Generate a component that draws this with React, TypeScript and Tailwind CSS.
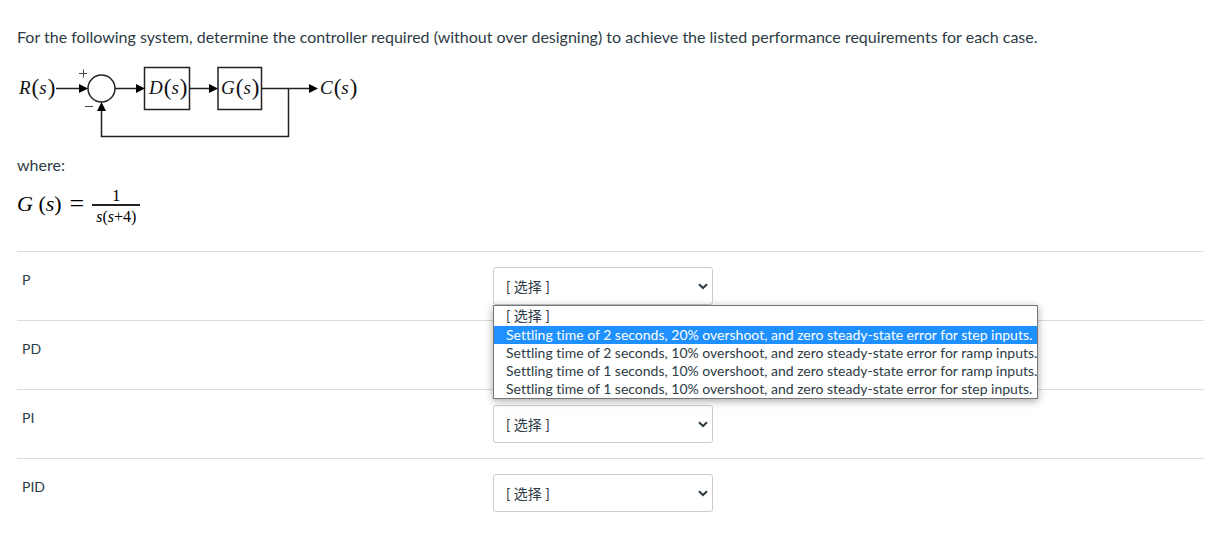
const PLACEHOLDER = '[ 选择 ]';

const options = [
  'Settling time of 2 seconds, 20% overshoot, and zero steady-state error for step inputs.',
  'Settling time of 2 seconds, 10% overshoot, and zero steady-state error for ramp inputs.',
  'Settling time of 1 seconds, 10% overshoot, and zero steady-state error for ramp inputs.',
  'Settling time of 1 seconds, 10% overshoot, and zero steady-state error for step inputs.',
];

const controllers = ['P', 'PD', 'PI', 'PID'];

function Signal({ x, name }: { x: number; name: string }) {
  return (
    <text x={x} y={29} fontSize={19} fill="#111">
      <tspan fontStyle="italic">{name}</tspan>
      <tspan dx={1} dy={1} fontSize={23}>(</tspan>
      <tspan dy={-1} fontStyle="italic">s</tspan>
      <tspan dx={1} dy={1} fontSize={23}>)</tspan>
    </text>
  );
}

function BlockDiagram() {
  return (
    <svg
      width="344"
      height="76"
      viewBox="0 0 344 76"
      role="img"
      aria-label="Feedback loop block diagram"
      className="block font-['Liberation_Serif',serif]"
    >
      <g fill="none" stroke="#222" strokeWidth="1.5">
        <path d="M39 23.5H64M98 23.5H120M173 23.5H194M244 23.5H294" />
        <path d="M271.5 23.5V71.5H84.5V45" />
        <circle cx="84.5" cy="23.5" r="13.5" />
        <rect x="127.5" y="2.5" width="45" height="42" />
        <rect x="201" y="2.5" width="43.5" height="42" />
      </g>
      <path
        fill="#000"
        d="M62 19L71 23.5L62 28ZM119 19L128 23.5L119 28ZM192 19L201 23.5L192 28ZM292 19L301 23.5L292 28ZM84.5 37L80 46H89Z"
      />
      <path stroke="#444" d="M62 8.500H70M66.500 4.500V12.500M68 41.500H76" />
      <Signal x={2} name="R" />
      <Signal x={132} name="D" />
      <Signal x={204} name="G" />
      <Signal x={303} name="C" />
    </svg>
  );
}

function TransferFunction() {
  return (
    <div className="flex h-9 items-start font-['Liberation_Serif',serif] text-[22px] leading-8 text-black">
      <span className="mr-2">
        <i>G</i> (<i>s</i>)
      </span>
      <span className="mr-2 text-[26px]">=</span>
      <span className="flex w-12 flex-col text-center text-base leading-4">
        <span className="border-b-2 border-[#222]">1</span>
        <span className="pt-[3px]">
          <i>s</i>(<i>s</i>+4)
        </span>
      </span>
    </div>
  );
}

function OptionList() {
  return (
    <ul
      role="listbox"
      aria-label="P"
      className="absolute top-full left-0 z-10 border border-[#767676] bg-white whitespace-nowrap shadow-[0_2px_8px_rgba(0,0,0,0.35)]"
    >
      <li role="option" aria-selected="false" className="h-5 pl-3 leading-5">
        {PLACEHOLDER}
      </li>
      {options.map((option, i) => (
        <li
          key={option}
          role="option"
          aria-selected={i === 0}
          className={`h-[18px] pl-3 leading-[18px] ${i === 0 ? 'bg-[#1e90ff] text-white' : ''}`}
        >
          {option}
        </li>
      ))}
    </ul>
  );
}

function AnswerRow({ name, open }: { name: string; open: boolean }) {
  const id = `answer-${name}`;

  return (
    <div className="flex border-t border-[#dddddd] py-[15px] text-sm">
      <label htmlFor={id} className="w-[40.1%] pt-[3px] pl-[5px] leading-5">
        {name}
      </label>
      <div className="relative">
        <select
          id={id}
          className="block h-[38px] w-[220px] appearance-none rounded-[3px] border border-[#c7cdd1] bg-white pt-0.5 pr-6 pl-3"
        >
          <option>{PLACEHOLDER}</option>
          {options.map((option) => (
            <option key={option}>{option}</option>
          ))}
        </select>
        <svg
          width="10"
          height="8"
          viewBox="0 0 10 8"
          className="pointer-events-none absolute top-4 left-[205px]"
          aria-hidden="true"
        >
          <path d="M1 1.200L5 5L9 1.200" fill="none" stroke="#2d3b45" strokeWidth="2" />
        </svg>
        {open && <OptionList />}
      </div>
    </div>
  );
}

export default function App() {
  return (
    <main className="bg-white pt-[25px] pr-2 pb-4 pl-[17px] font-['Lato','Noto_Sans_CJK_SC',sans-serif] text-base text-[#2d3b45] [font-variant-ligatures:none]">
      <p>For the following system, determine the controller required (without over designing) to achieve the listed performance requirements for each case.</p>
      <div className="mt-4 mb-3">
        <BlockDiagram />
      </div>
      <p>where:</p>
      <div className="mt-[11px] mb-[27px]">
        <TransferFunction />
      </div>
      {controllers.map((name) => (
        <AnswerRow key={name} name={name} open={name === 'P'} />
      ))}
    </main>
  );
}
